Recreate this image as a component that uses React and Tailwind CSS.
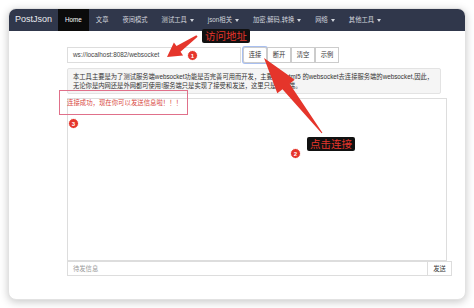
import React from "react";

const RED = "#e5352b";

const arrowPoints = (tx, ty, hx, hy, headLen, headW, tailW, neckW) => {
  const dx = hx - tx;
  const dy = hy - ty;
  const len = Math.sqrt(dx * dx + dy * dy);
  const ux = dx / len;
  const uy = dy / len;
  const nx = -uy;
  const ny = ux;
  const bx = hx - ux * headLen;
  const by = hy - uy * headLen;
  const p = (x, y) => `${x.toFixed(1)},${y.toFixed(1)}`;
  return [
    p(tx + (nx * tailW) / 2, ty + (ny * tailW) / 2),
    p(bx + (nx * neckW) / 2, by + (ny * neckW) / 2),
    p(bx + (nx * headW) / 2, by + (ny * headW) / 2),
    p(hx, hy),
    p(bx - (nx * headW) / 2, by - (ny * headW) / 2),
    p(bx - (nx * neckW) / 2, by - (ny * neckW) / 2),
    p(tx - (nx * tailW) / 2, ty - (ny * tailW) / 2),
  ].join(" ");
};

const Caret = () => (
  <svg width="4" height="3" viewBox="0 0 4 3" className="ml-[3px] inline-block">
    <path d="M0 0 L4 0 L2 3 Z" fill="#d0d4dc" />
  </svg>
);

const navItems = [
  { label: "文章" },
  { label: "夜间模式" },
  { label: "测试工具", caret: true },
  { label: "json相关", caret: true },
  { label: "加密,解码,转换", caret: true },
  { label: "网络", caret: true },
  { label: "其他工具", caret: true },
];

const Badge = ({ n, className }) => (
  <div
    className={`absolute flex h-[11px] w-[11px] items-center justify-center rounded-full border border-white text-[6px] font-bold leading-none text-white ${className}`}
    style={{ backgroundColor: RED }}
  >
    {n}
  </div>
);

const Label = ({ children, className }) => (
  <div
    className={`absolute rounded-[2px] bg-[#111] px-[3px] text-[10.5px] leading-[14px] ${className}`}
    style={{ color: RED }}
  >
    {children}
  </div>
);

export default function App() {
  const font = { fontFamily: '"Liberation Sans", "Noto Sans CJK SC", sans-serif' };
  const btn =
    "flex h-[16px] w-[24px] items-center justify-center border border-[#ccc] bg-white text-[6.3px] text-[#333]";

  return (
    <div className="relative h-[308px] w-[474px] overflow-hidden bg-white p-[8px]" style={font}>
      <div className="flex h-[292px] w-[458px] flex-col overflow-hidden rounded-[8px] border border-[#e2e2e2] bg-white shadow-[0_2px_8px_rgba(0,0,0,0.22)]">
        <nav className="flex h-[22px] shrink-0 items-stretch bg-[#30374b] pl-[6px]">
          <div className="flex items-center pr-[6px] text-[9px] text-[#e8eaee]">PostJson</div>
          <div className="flex items-center bg-[#0b0b0b] px-[7px] text-[6.3px] text-white">Home</div>
          {navItems.map((it) => (
            <div
              key={it.label}
              className="flex items-center px-[7px] text-[6.3px] text-[#d0d4dc]"
            >
              {it.label}
              {it.caret && <Caret />}
            </div>
          ))}
        </nav>

        <div className="flex flex-1 flex-col pl-[58px] pr-[18px] pt-[16px]">
          <div className="flex items-center">
            <div className="flex h-[16px] w-[174px] items-center border border-[#ddd] px-[5px] text-[6.4px] text-[#444]">
              ws://localhost:8082/websocket
            </div>
            <div className="ml-[2px] flex">
              <div className={`${btn} rounded-[2px] border-[#5b7fd6] shadow-[0_0_0_1px_#a8bff0]`}>连接</div>
              <div className={btn}>断开</div>
              <div className={btn}>清空</div>
              <div className={btn}>示例</div>
            </div>
          </div>

          <div className="mr-[6px] mt-[5px] h-[26px] rounded-[2px] border border-[#e3e3e3] bg-[#f5f5f5] px-[5px] pt-[3px] text-[6.3px] leading-[9px] text-[#333]">
            <div className="whitespace-nowrap">
              本工具主要是为了测试服务端websocket功能是否完善可用而开发，主要是用html5 的websocket去连接服务端的websocket,因此，
            </div>
            <div className="whitespace-nowrap">
              无论你是内网还是外网都可使用!服务端只是实现了接受和发送，这里只是测试端。
            </div>
          </div>

          <div className="mt-[4px] h-[163px] border border-[#ddd] bg-white" />

          <div className="mr-[-5px] flex h-[15px]">
            <div className="flex flex-1 items-center border border-[#ddd] px-[5px] text-[6.3px] text-[#999]">
              待发信息
            </div>
            <div className="flex w-[24px] items-center justify-center border border-l-0 border-[#ddd] text-[6.3px] text-[#333]">
              发送
            </div>
          </div>
        </div>
      </div>

      <div className="absolute left-[59px] top-[90px] flex h-[25px] w-[129px] items-center border border-[#e0708a] pl-[7px] text-[6.4px] text-[#d9483e]">
        连接成功，现在你可以发送信息啦！！！
      </div>

      <svg className="pointer-events-none absolute left-0 top-0" width="474" height="308">
        <polygon points={arrowPoints(197, 36, 167, 57, 14, 16, 2, 7)} fill={RED} />
        <polygon points={arrowPoints(322, 133, 264, 58, 36, 22, 1, 9)} fill={RED} />
      </svg>

      <Label className="left-[202px] top-[29px]">访问地址</Label>
      <Label className="left-[307px] top-[137px]">点击连接</Label>
      <Badge n="1" className="left-[187px] top-[50px]" />
      <Badge n="2" className="left-[290px] top-[148px]" />
      <Badge n="3" className="left-[68px] top-[118px]" />
    </div>
  );
}
